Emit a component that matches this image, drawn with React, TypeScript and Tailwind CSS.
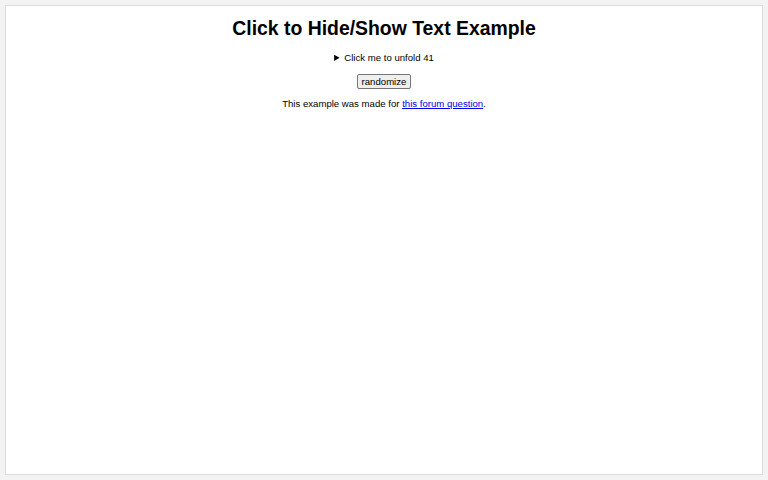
import { useState } from 'react';

export default function App() {
  const [count, setCount] = useState(41);

  return (
    <div className="min-h-screen bg-[#f3f3f3] p-[5px] font-['Liberation_Sans',Arial,sans-serif] text-black">
      <div className="h-[470px] bg-white border border-[#dcdcdc] flex flex-col items-center">
        <h1 className="mt-[10px] text-[19.4px] font-bold leading-[24px]">Click to Hide/Show Text Example</h1>

        {/* collapsible block */}
        <details className="mt-[12px] text-[9.6px] leading-[12px]">
          <summary className="cursor-pointer">Click me to unfold {count}</summary>
          <p>Hidden text is now shown.</p>
        </details>

        <button
          onClick={() => setCount(Math.floor(Math.random() * 100))}
          className="mt-[10px] h-[15px] px-[4px] flex items-center text-[9.6px] leading-none bg-[#efefef] border border-[#767676] rounded-[2px]"
        >
          randomize
        </button>

        <p className="mt-[9px] text-[9.6px] leading-[12px]">
          This example was made for{' '}
          <a href="#" className="text-[#0000ee] underline">this forum question</a>.
        </p>
      </div>
    </div>
  );
}
